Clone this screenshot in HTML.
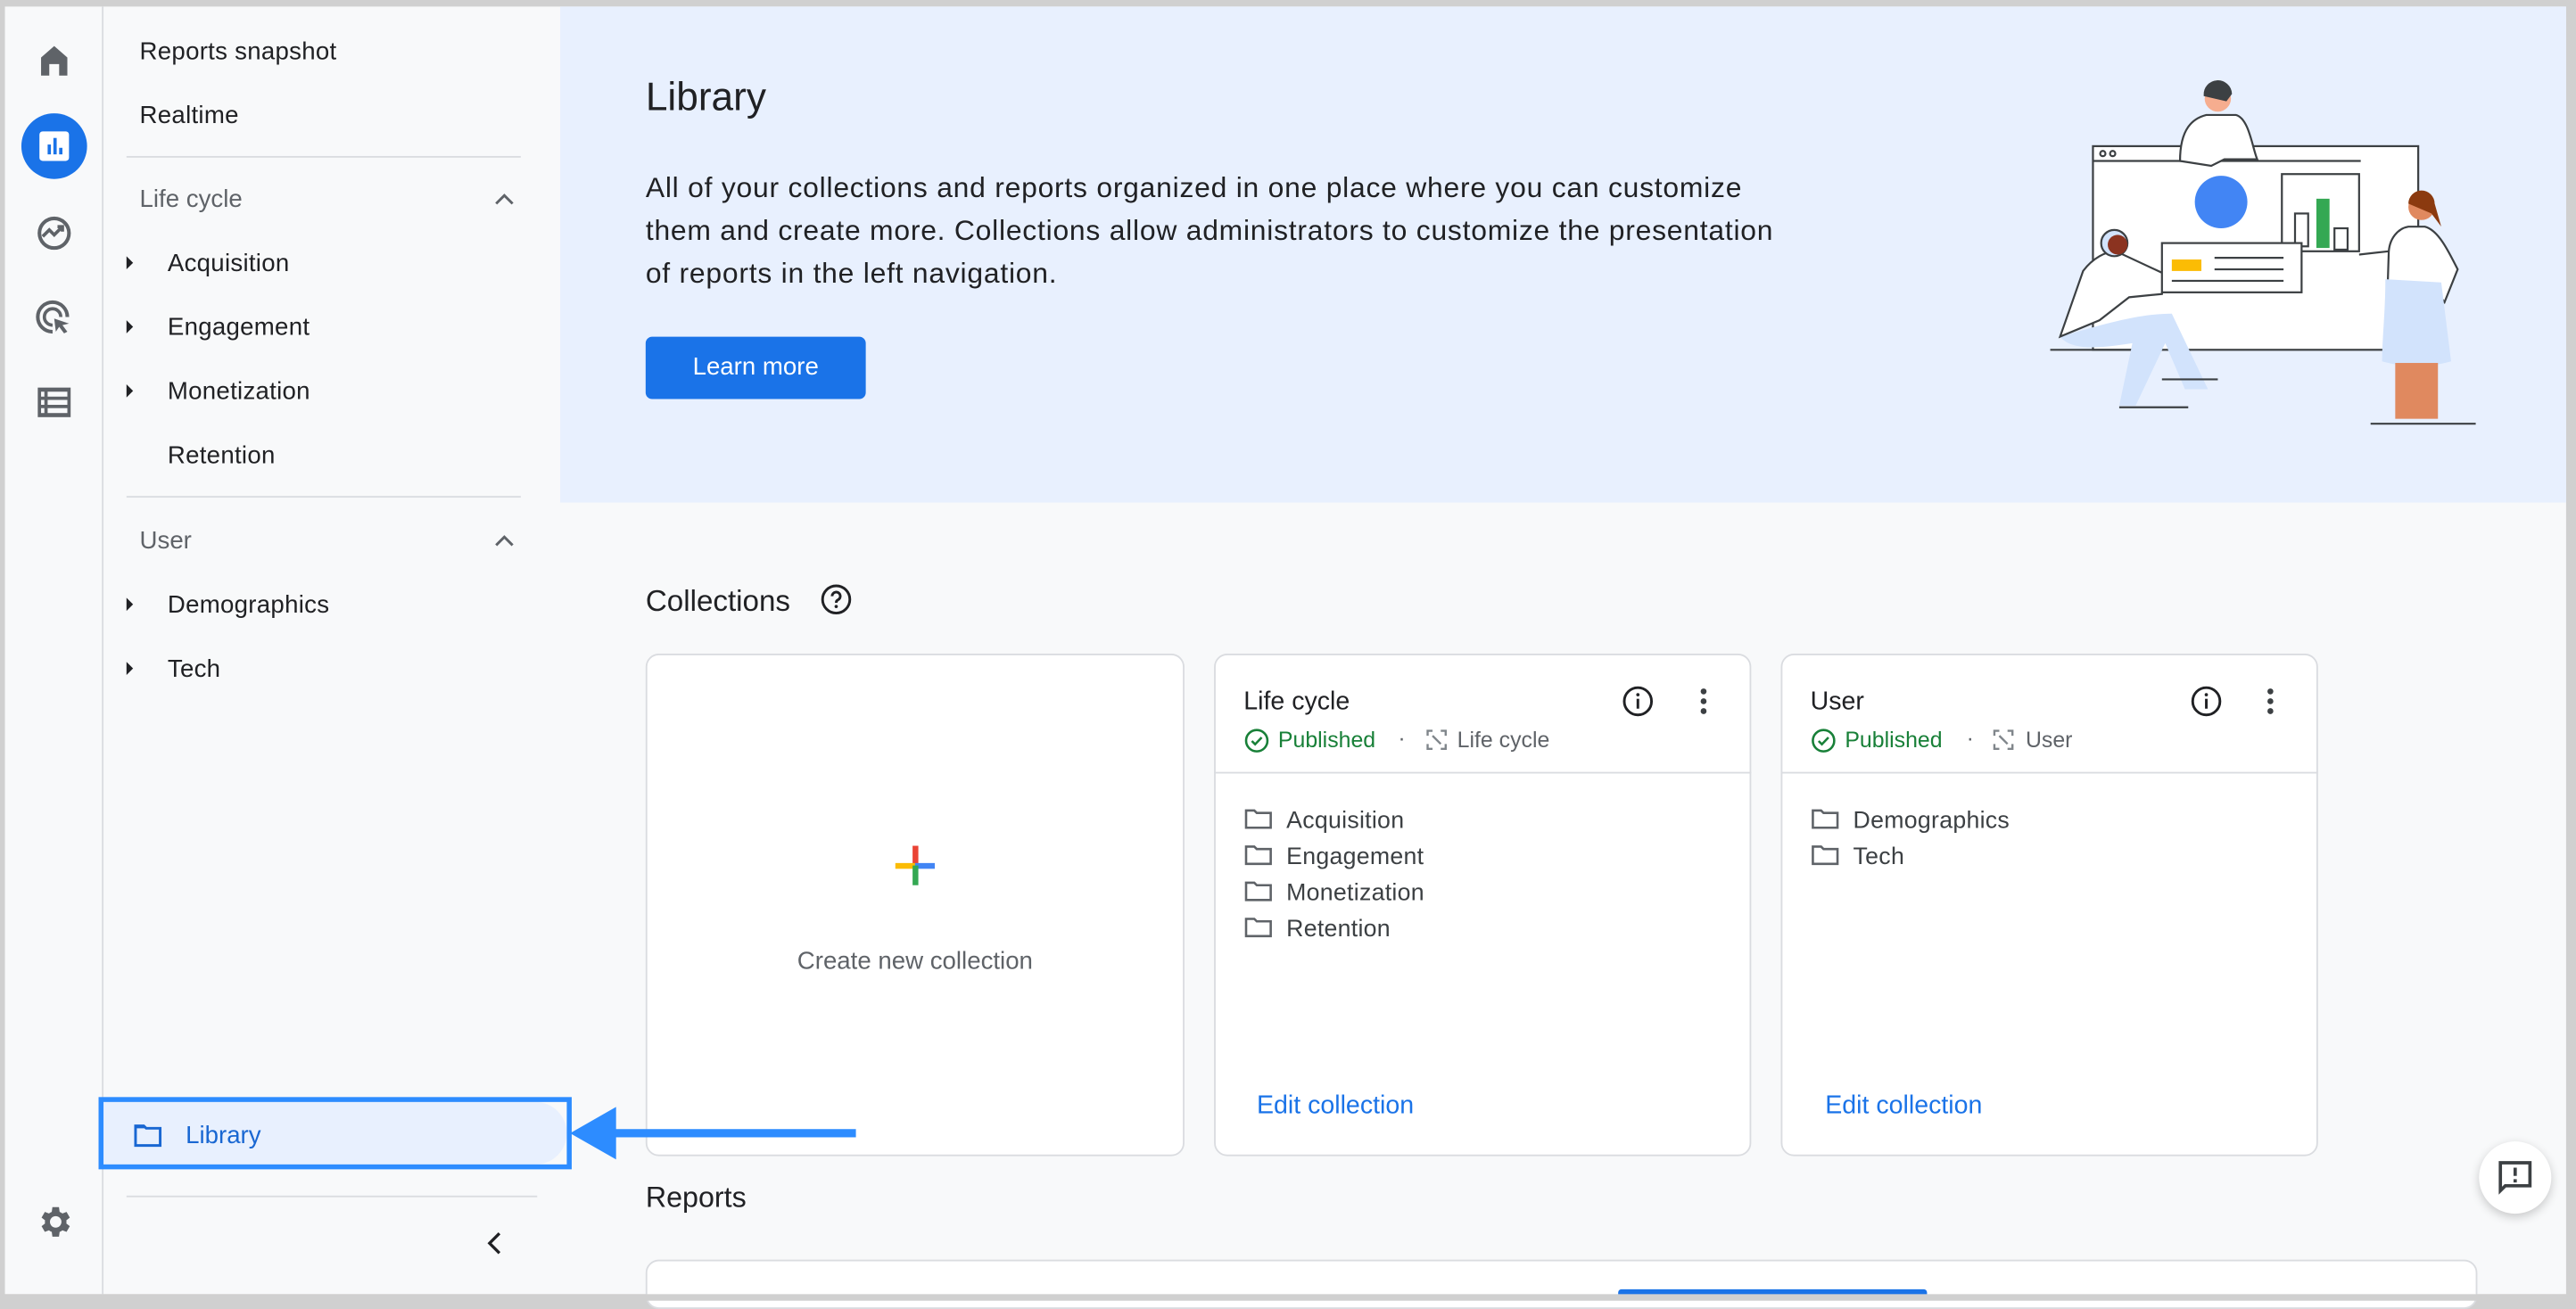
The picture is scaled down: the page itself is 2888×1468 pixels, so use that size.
<!DOCTYPE html>
<html><head><meta charset="utf-8"><style>
*{margin:0;padding:0;box-sizing:border-box}
html,body{width:2888px;height:1459px;overflow:hidden;background:#d0d0d0;font-family:"Liberation Sans",Arial,sans-serif}
#s{position:absolute;left:0;top:0;width:1568px;height:792px;transform:scale(1.8418);transform-origin:0 0}
.a{position:absolute;white-space:nowrap;line-height:20px}
.n{font-size:15px;color:#202124;letter-spacing:.15px}
.g{color:#5f6368}
.card{position:absolute;top:398px;height:306px;background:#fff;border:1px solid #dadce0;border-radius:8px}
.fi{font-size:14.5px;color:#3c4043;letter-spacing:.15px}
</style></head><body><div id="s">
<div style="position:absolute;left:3px;top:4px;width:1559px;height:784px;background:#f8f9fa"></div>
<div style="position:absolute;left:62px;top:4px;width:1px;height:784px;background:#dadce0"></div>
<div style="position:absolute;left:341px;top:4px;width:1221px;height:302px;background:#e8f0fe"></div>

<svg class="a" style="left:21px;top:25px" width="24" height="24" viewBox="0 0 24 24"><path d="M4 21V10l8-7 8 7v11h-5v-7H9v7z" fill="#5f6368"/></svg>
<div class="a" style="left:13px;top:69px;width:40px;height:40px;border-radius:50%;background:#1a73e8"></div>
<svg class="a" style="left:23px;top:79px" width="20" height="20" viewBox="0 0 20 20"><rect x="1" y="1" width="18" height="18" rx="2" fill="#fff"/><rect x="6" y="9" width="2" height="6" fill="#1a73e8"/><rect x="9.5" y="5" width="2" height="10" fill="#1a73e8"/><rect x="13" y="11" width="2" height="4" fill="#1a73e8"/></svg>
<svg class="a" style="left:21px;top:130px" width="24" height="24" viewBox="0 0 24 24"><circle cx="12" cy="12" r="9" fill="none" stroke="#5f6368" stroke-width="2.2"/><path d="M5 14l4-4 3 3 5-5M14 8h3v3" fill="none" stroke="#5f6368" stroke-width="2"/></svg>
<svg class="a" style="left:21px;top:182px" width="24" height="24" viewBox="0 0 24 24"><path d="M20 11A9 9 0 1 0 11 20" fill="none" stroke="#5f6368" stroke-width="2.2"/><path d="M16 11a5 5 0 1 0-5 5" fill="none" stroke="#5f6368" stroke-width="2"/><path d="M12 12l9 3-4 1 3 4-2 1-3-4-2 3z" fill="#5f6368"/></svg>
<svg class="a" style="left:22px;top:235px" width="22" height="20" viewBox="0 0 22 20"><rect x="1" y="1" width="20" height="18" fill="#5f6368"/><g fill="#f8f9fa"><rect x="3" y="3.5" width="2" height="3"/><rect x="7" y="3.5" width="12" height="3"/><rect x="3" y="8.5" width="2" height="3"/><rect x="7" y="8.5" width="12" height="3"/><rect x="3" y="13.5" width="2" height="3"/><rect x="7" y="13.5" width="12" height="3"/></g></svg>
<svg class="a" style="left:21px;top:732px" width="24" height="24" viewBox="0 0 24 24"><path fill="#5f6368" d="M19.4 13a7.5 7.5 0 0 0 0-2l2.1-1.6-2-3.5-2.5 1a7 7 0 0 0-1.7-1L14.9 3h-4l-.4 2.9a7 7 0 0 0-1.7 1l-2.5-1-2 3.5L6.4 11a7.5 7.5 0 0 0 0 2l-2.1 1.6 2 3.5 2.5-1a7 7 0 0 0 1.7 1l.4 2.9h4l.4-2.9a7 7 0 0 0 1.7-1l2.5 1 2-3.5zM12.9 15.5a3.5 3.5 0 1 1 0-7 3.5 3.5 0 0 1 0 7z"/></svg>

<div class="a n" style="left:85px;top:22px">Reports snapshot</div>
<div class="a n" style="left:85px;top:61px">Realtime</div>
<div class="a" style="left:77px;top:95px;width:240px;height:1px;background:#dadce0"></div>
<div class="a g" style="left:85px;top:112px;font-size:15px">Life cycle</div>
<svg class="a" style="left:300px;top:115px" width="14" height="12" viewBox="0 0 14 12"><path d="M2 9l5-5 5 5" fill="none" stroke="#5f6368" stroke-width="1.6"/></svg>
<div class="a" style="left:77px;top:156px;border-left:4px solid #202124;border-top:4px solid transparent;border-bottom:4px solid transparent;line-height:0"></div>
<div class="a n" style="left:102px;top:151px">Acquisition</div>
<div class="a" style="left:77px;top:195px;border-left:4px solid #202124;border-top:4px solid transparent;border-bottom:4px solid transparent;line-height:0"></div>
<div class="a n" style="left:102px;top:190px">Engagement</div>
<div class="a" style="left:77px;top:234px;border-left:4px solid #202124;border-top:4px solid transparent;border-bottom:4px solid transparent;line-height:0"></div>
<div class="a n" style="left:102px;top:229px">Monetization</div>
<div class="a n" style="left:102px;top:268px">Retention</div>
<div class="a" style="left:77px;top:302px;width:240px;height:1px;background:#dadce0"></div>
<div class="a g" style="left:85px;top:320px;font-size:15px">User</div>
<svg class="a" style="left:300px;top:323px" width="14" height="12" viewBox="0 0 14 12"><path d="M2 9l5-5 5 5" fill="none" stroke="#5f6368" stroke-width="1.6"/></svg>
<div class="a" style="left:77px;top:364px;border-left:4px solid #202124;border-top:4px solid transparent;border-bottom:4px solid transparent;line-height:0"></div>
<div class="a n" style="left:102px;top:359px">Demographics</div>
<div class="a" style="left:77px;top:403px;border-left:4px solid #202124;border-top:4px solid transparent;border-bottom:4px solid transparent;line-height:0"></div>
<div class="a n" style="left:102px;top:398px">Tech</div>

<div class="a" style="left:63px;top:671px;width:282px;height:38px;background:#e8f0fe;border-radius:0 20px 20px 0"></div>
<div class="a" style="left:60px;top:668px;width:288px;height:44px;border:3px solid #2d8cff"></div>
<svg class="a" style="left:81px;top:684px" width="18" height="15" viewBox="0 0 18 15"><path d="M1.5 1.5h5l1.5 1.5h8.5v10.5h-15z" fill="none" stroke="#1967d2" stroke-width="1.6"/><path d="M1.5 1.5h5l1.5 1.5h-6.5z" fill="#1967d2"/></svg>
<div class="a" style="left:113px;top:682px;font-size:15px;color:#1967d2">Library</div>
<div class="a" style="left:77px;top:728px;width:250px;height:1px;background:#dadce0"></div>
<svg class="a" style="left:295px;top:749px" width="12" height="16" viewBox="0 0 12 16"><path d="M9 2L3 8l6 6" fill="none" stroke="#202124" stroke-width="1.8"/></svg>

<div class="a" style="left:393px;top:45px;font-size:24px;line-height:30px;color:#202124">Library</div>
<div class="a" style="left:393px;top:101px;font-size:17.3px;line-height:26px;color:#202124;white-space:normal;width:690px;letter-spacing:.42px">All of your collections and reports organized in one place where you can customize them and create more. Collections allow administrators to customize the presentation of reports in the left navigation.</div>
<div class="a" style="left:393px;top:205px;width:134px;height:38px;background:#1a73e8;border-radius:4px;color:#fff;font-size:15px;line-height:38px;text-align:center">Learn more</div>

<svg class="a" style="left:1240px;top:40px" width="280" height="230" viewBox="1240 40 280 230" fill="none" stroke="#3c4043" stroke-width="1.2">
<rect x="1274" y="89" width="198" height="124" fill="#fff"/>
<line x1="1274" y1="98" x2="1437" y2="98"/>
<circle cx="1280" cy="93.5" r="1.6"/><circle cx="1286" cy="93.5" r="1.6"/>
<line x1="1248" y1="213" x2="1310" y2="213"/>
<circle cx="1352" cy="123" r="16" fill="#4285f4" stroke="none"/>
<path d="M1327 98c0-20 8-26 16-28h18c8 2 10 20 13 27h-20l-8 4z" fill="#fff"/>
<circle cx="1350" cy="60" r="8" fill="#f6ad8f" stroke="none"/>
<path d="M1342 58a8 8 0 0 1 16 -1l-3 4z" fill="#3c4043"/>
<rect x="1389" y="106" width="47" height="47" fill="#fff"/>
<rect x="1397" y="130" width="8" height="20"/><rect x="1410" y="121" width="8" height="30" fill="#34a853" stroke="none"/><rect x="1421" y="139" width="8" height="13"/>
<path d="M1254 205c8 10 30 6 44 4l-8 38h10l18-38 12 28h14l-22-46c-20 0-40 6-68 14z" fill="#d2e3fc" stroke="none"/>
<path d="M1254 205l14-40c6-8 14-12 20-12l30 14-2 12-20 2-18 14z" fill="#fff"/>
<rect x="1316" y="148" width="85" height="30" fill="#fff"/>
<rect x="1322" y="158" width="18" height="7" fill="#fbbc04" stroke="none"/>
<line x1="1348" y1="157" x2="1390" y2="157"/><line x1="1348" y1="164" x2="1390" y2="164"/><line x1="1322" y1="171" x2="1390" y2="171"/>
<circle cx="1287" cy="148" r="8" fill="#d2e3fc"/><circle cx="1289" cy="149" r="6" fill="#8b3320" stroke="none"/>
<line x1="1290" y1="248" x2="1332" y2="248"/><line x1="1316" y1="231" x2="1350" y2="231"/>
<path d="M1452 219l2-64c0-10 6-16 12-17h10c8 2 14 14 20 26l-8 20-6-8 2 41c-12 4-20 4-32 2z" fill="#fff"/>
<path d="M1452 170c0 20-2 36-2 50 14 4 28 4 42 0l-6-48z" fill="#d2e3fc" stroke="none"/>
<rect x="1458" y="221" width="26" height="34" fill="#e0895f" stroke="none"/>
<circle cx="1474" cy="126" r="8" fill="#e0895f" stroke="none"/><path d="M1466 124a8 8 0 0 1 16 0l4 14-6-8z" fill="#8b3a0f" stroke="none"/>
<path d="M1436 155l18-2"/>
<line x1="1443" y1="258" x2="1507" y2="258"/>
</svg>

<div class="a" style="left:393px;top:354px;font-size:18px;line-height:24px;color:#202124">Collections</div>
<svg class="a" style="left:499px;top:355px" width="20" height="20" viewBox="0 0 20 20"><circle cx="10" cy="10" r="8.3" fill="none" stroke="#202124" stroke-width="1.6"/><path d="M7.5 8a2.5 2.5 0 1 1 3.5 2.3c-.8.4-1 .9-1 1.7" fill="none" stroke="#202124" stroke-width="1.6"/><circle cx="10" cy="14.3" r="1" fill="#202124"/></svg>

<div class="card" style="left:393px;width:328px"></div>
<svg class="a" style="left:543px;top:513px" width="28" height="28" viewBox="0 0 28 28"><rect x="12.5" y="2" width="3.5" height="12" fill="#ea4335"/><rect x="2" y="12.5" width="12" height="3.5" fill="#fbbc04"/><rect x="14" y="12.5" width="12" height="3.5" fill="#4285f4"/><rect x="12.5" y="14" width="3.5" height="12" fill="#34a853"/></svg>
<div class="a" style="left:393px;width:328px;text-align:center;top:576px;font-size:15px;color:#5f6368">Create new collection</div>

<div class="card" style="left:739px;width:327px"></div>
<div class="a" style="left:739px;top:470px;width:327px;height:1px;background:#dadce0"></div>
<div class="a" style="left:757px;top:418px;font-size:15.5px;color:#202124">Life cycle</div>
<svg class="a" style="left:987px;top:417px" width="20" height="20" viewBox="0 0 20 20"><circle cx="10" cy="10" r="8.3" fill="none" stroke="#202124" stroke-width="1.6"/><rect x="9.2" y="8.5" width="1.6" height="6" fill="#202124"/><circle cx="10" cy="6" r="1" fill="#202124"/></svg>
<svg class="a" style="left:1031px;top:417px" width="12" height="20" viewBox="0 0 12 20"><circle cx="6" cy="4" r="1.8" fill="#3c4043"/><circle cx="6" cy="10" r="1.8" fill="#3c4043"/><circle cx="6" cy="16" r="1.8" fill="#3c4043"/></svg>
<svg class="a" style="left:757px;top:443px" width="16" height="16" viewBox="0 0 16 16"><circle cx="8" cy="8" r="6.5" fill="none" stroke="#188038" stroke-width="1.4"/><path d="M5 8.2l2 2 4-4.2" fill="none" stroke="#188038" stroke-width="1.4"/></svg>
<div class="a" style="left:778px;top:441px;font-size:13.5px;color:#188038">Published</div>
<div class="a" style="left:851px;top:440px;font-size:13.5px;color:#5f6368">·</div>
<svg class="a" style="left:867px;top:443px" width="15" height="15" viewBox="0 0 15 15"><path d="M2 5V2h3M10 2h3v3M13 10v3h-3M5 13H2v-3M5 5l5 5" fill="none" stroke="#80868b" stroke-width="1.3"/></svg>
<div class="a" style="left:887px;top:441px;font-size:13.5px;color:#5f6368">Life cycle</div>
<div class="a fi" style="left:783px;top:490px">Acquisition</div>
<div class="a fi" style="left:783px;top:512px">Engagement</div>
<div class="a fi" style="left:783px;top:534px">Monetization</div>
<div class="a fi" style="left:783px;top:556px">Retention</div>
<div class="a" style="left:765px;top:664px;font-size:15.5px;color:#1a73e8">Edit collection</div>

<div class="card" style="left:1084px;width:327px"></div>
<div class="a" style="left:1084px;top:470px;width:327px;height:1px;background:#dadce0"></div>
<div class="a" style="left:1102px;top:418px;font-size:15.5px;color:#202124">User</div>
<svg class="a" style="left:1333px;top:417px" width="20" height="20" viewBox="0 0 20 20"><circle cx="10" cy="10" r="8.3" fill="none" stroke="#202124" stroke-width="1.6"/><rect x="9.2" y="8.5" width="1.6" height="6" fill="#202124"/><circle cx="10" cy="6" r="1" fill="#202124"/></svg>
<svg class="a" style="left:1376px;top:417px" width="12" height="20" viewBox="0 0 12 20"><circle cx="6" cy="4" r="1.8" fill="#3c4043"/><circle cx="6" cy="10" r="1.8" fill="#3c4043"/><circle cx="6" cy="16" r="1.8" fill="#3c4043"/></svg>
<svg class="a" style="left:1102px;top:443px" width="16" height="16" viewBox="0 0 16 16"><circle cx="8" cy="8" r="6.5" fill="none" stroke="#188038" stroke-width="1.4"/><path d="M5 8.2l2 2 4-4.2" fill="none" stroke="#188038" stroke-width="1.4"/></svg>
<div class="a" style="left:1123px;top:441px;font-size:13.5px;color:#188038">Published</div>
<div class="a" style="left:1197px;top:440px;font-size:13.5px;color:#5f6368">·</div>
<svg class="a" style="left:1212px;top:443px" width="15" height="15" viewBox="0 0 15 15"><path d="M2 5V2h3M10 2h3v3M13 10v3h-3M5 13H2v-3M5 5l5 5" fill="none" stroke="#80868b" stroke-width="1.3"/></svg>
<div class="a" style="left:1233px;top:441px;font-size:13.5px;color:#5f6368">User</div>
<div class="a fi" style="left:1128px;top:490px">Demographics</div>
<div class="a fi" style="left:1128px;top:512px">Tech</div>
<div class="a" style="left:1111px;top:664px;font-size:15.5px;color:#1a73e8">Edit collection</div>

<svg class="a" style="left:757px;top:492px" width="18" height="80" viewBox="0 0 18 80"><g fill="none" stroke="#5f6368" stroke-width="1.4"><path d="M1.5 1.5h5l1.5 1.5h8.5v9h-15z"/><path d="M1.5 23.5h5l1.5 1.5h8.5v9h-15z"/><path d="M1.5 45.5h5l1.5 1.5h8.5v9h-15z"/><path d="M1.5 67.5h5l1.5 1.5h8.5v9h-15z"/></g></svg>
<svg class="a" style="left:1102px;top:492px" width="18" height="40" viewBox="0 0 18 40"><g fill="none" stroke="#5f6368" stroke-width="1.4"><path d="M1.5 1.5h5l1.5 1.5h8.5v9h-15z"/><path d="M1.5 23.5h5l1.5 1.5h8.5v9h-15z"/></g></svg>

<!-- arrow on top -->
<svg class="a" style="left:346px;top:672px" width="176" height="36" viewBox="0 0 176 36"><path d="M1 18L29 2v32z" fill="#2d8cff"/><rect x="28" y="15.5" width="147" height="5" fill="#2d8cff"/></svg>

<div class="a" style="left:393px;top:718px;font-size:17.5px;line-height:22px;color:#202124">Reports</div>
<div class="a" style="left:393px;top:767px;width:1115px;height:30px;background:#fff;border:1px solid #dadce0;border-radius:8px"></div>
<div class="a" style="left:985px;top:785px;width:188px;height:4px;background:#1a73e8;border-radius:2px 2px 0 0"></div>
<div class="a" style="left:0;top:788px;width:1568px;height:4px;background:#d0d0d0"></div>

<div class="a" style="left:1509px;top:695px;width:44px;height:44px;border-radius:50%;background:#fff;box-shadow:0 2px 6px rgba(0,0,0,.2)"></div>
<svg class="a" style="left:1520px;top:706px" width="22" height="22" viewBox="0 0 22 22"><path d="M2 2h18v14H5l-3 3z" fill="none" stroke="#3c4043" stroke-width="2"/><rect x="10" y="5" width="2" height="5" fill="#3c4043"/><rect x="10" y="12" width="2" height="2" fill="#3c4043"/></svg>
</div></body></html>
